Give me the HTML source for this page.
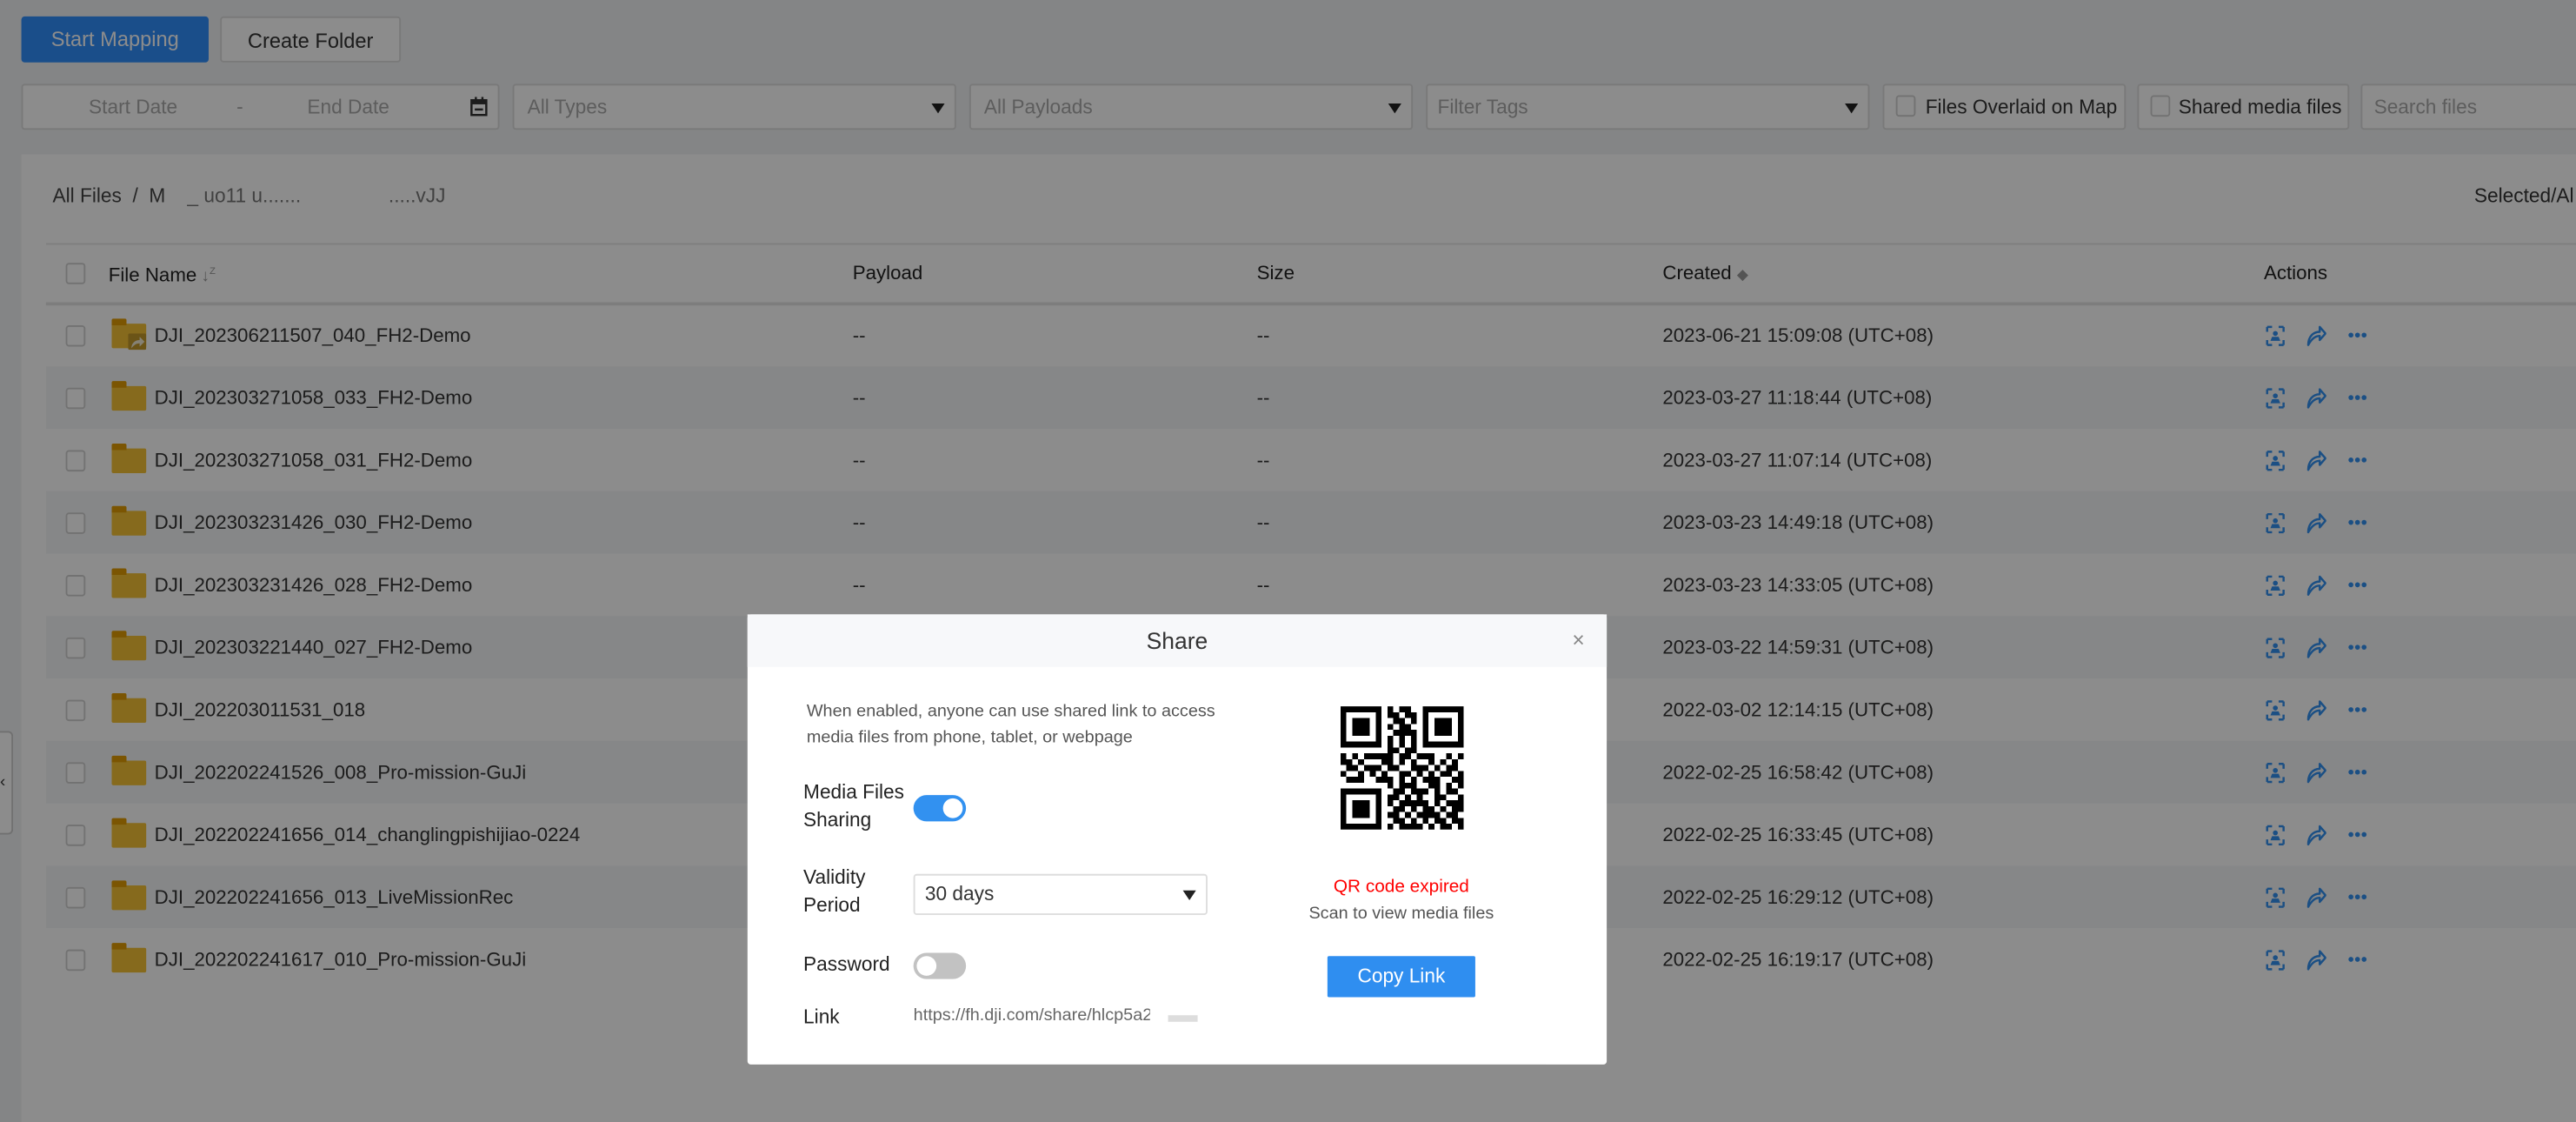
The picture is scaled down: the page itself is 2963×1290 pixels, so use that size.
<!DOCTYPE html>
<html><head><meta charset="utf-8">
<style>
*{box-sizing:border-box;margin:0;padding:0}
html,body{width:2963px;height:1290px;overflow:hidden;background:#f0f2f5}
body{font-family:"Liberation Sans",sans-serif;}
#w{position:absolute;left:0;top:0;width:1568px;height:683px;overflow:hidden;transform:scale(1.88967,1.88873);transform-origin:0 0;background:#f0f2f5;color:#333;font-size:12px}
.a{position:absolute}
.btn{position:absolute;height:28px;line-height:28px;text-align:center;font-size:12.5px;border-radius:2px}
.box{position:absolute;top:51px;height:28px;border:1px solid #dcdcdc;background:#fff;border-radius:2px;line-height:26px;font-size:12px}
.ph{color:#aaa}
.tri{position:absolute;width:0;height:0;border-left:4px solid transparent;border-right:4px solid transparent;border-top:6px solid #222}
.cb{position:absolute;width:12px;height:13px;border:1px solid #d0d0d0;border-radius:2px;background:#fff}
.row{position:absolute;left:28px;width:1540px;height:38px;line-height:38px;font-size:11.8px;color:#333}
.row.s{background:#f5f6f7}
.row span{position:absolute}
.fold{position:absolute;left:40px;top:12px;width:21px;height:15px;background:#f4c235;border-radius:1px}
.fold:before{content:"";position:absolute;left:0;top:-3px;width:9px;height:4px;background:#e09b05;border-radius:1px 1px 0 0}
.tog{position:absolute;width:32px;height:16px;border-radius:8px}
.tog i{position:absolute;top:2px;width:12px;height:12px;border-radius:6px;background:#fff}
#ov{position:absolute;left:0;top:0;width:1568px;height:683px;background:rgba(0,0,0,.45)}
</style></head><body>
<div id="w">
<div class="btn" style="left:13px;top:10px;width:114px;background:#318efb;color:#fff">Start Mapping</div>
<div class="btn" style="left:134px;top:10px;width:110px;background:#fff;border:1px solid #dcdcdc;color:#333">Create Folder</div>

<div class="box" style="left:13px;width:291px"><span class="a ph" style="left:40px">Start Date</span><span class="a ph" style="left:130px">-</span><span class="a ph" style="left:173px">End Date</span>
<svg class="a" style="left:272px;top:7px" width="11" height="12" viewBox="0 0 11 12"><rect x="1" y="2" width="9" height="9" fill="none" stroke="#333" stroke-width="1.3"/><rect x="1" y="2" width="9" height="2.5" fill="#333"/><rect x="3" y="0" width="1.3" height="3" fill="#333"/><rect x="7" y="0" width="1.3" height="3" fill="#333"/><rect x="3" y="7" width="5" height="1.3" fill="#333"/></svg></div>
<div class="box" style="left:312px;width:270px"><span class="a ph" style="left:8px">All Types</span><i class="tri" style="right:6px;top:11px"></i></div>
<div class="box" style="left:590px;width:270px"><span class="a ph" style="left:8px">All Payloads</span><i class="tri" style="right:6px;top:11px"></i></div>
<div class="box" style="left:868px;width:270px"><span class="a ph" style="left:6px">Filter Tags</span><i class="tri" style="right:6px;top:11px"></i></div>
<div class="box" style="left:1146px;width:148px"><i class="cb" style="left:7px;top:6px"></i><span class="a" style="left:25px">Files Overlaid on Map</span></div>
<div class="box" style="left:1301px;width:129px"><i class="cb" style="left:7px;top:6px"></i><span class="a" style="left:24px">Shared media files</span></div>
<div class="box" style="left:1437px;width:140px"><span class="a ph" style="left:7px">Search files</span></div>

<div class="a" style="left:13px;top:94px;width:1560px;height:600px;background:#fff"></div>
<div class="a" style="left:32px;top:112px;font-size:12px;color:#444">All Files&nbsp; /&nbsp; M<span style="color:#777">&nbsp;&nbsp;&nbsp; _ uo11 u.......&nbsp;&nbsp;&nbsp;&nbsp;&nbsp;&nbsp;&nbsp;&nbsp;&nbsp;&nbsp;&nbsp;&nbsp;&nbsp;&nbsp;&nbsp; .....vJJ</span></div>
<div class="a" style="left:1506px;top:112px;color:#333">Selected/Al</div>
<div class="a" style="left:28px;top:148px;width:1540px;height:1px;background:#e6e6e6"></div>
<div class="row" style="top:148px;height:36px;line-height:36px;color:#222">
<i class="cb" style="left:12px;top:12px"></i>
<span style="left:38px">File Name<span style="position:static;color:#999;font-size:10px"> ↓<sup style="font-size:6px">Z</sup></span></span>
<span style="left:491px">Payload</span><span style="left:737px">Size</span><span style="left:984px">Created <span style="position:static;color:#999;font-size:9px">◆</span></span><span style="left:1350px">Actions</span>
</div>
<div class="a" style="left:28px;top:184px;width:1540px;height:2px;background:#e3e3e3"></div>
<div id="rows"></div>

<div class="a" style="left:0;top:445px;width:8px;height:63px;background:#fff;border:1px solid #ccc;border-left:none;border-radius:0 3px 3px 0;font-size:10px;line-height:61px;color:#333">‹</div>

<div id="ov"></div>

<div class="a" style="left:455px;top:374px;width:523px;height:274px;background:#fff;border-radius:2px">
<div class="a" style="left:0;top:0;width:523px;height:32px;background:#f7f8fa;text-align:center;line-height:32px;font-size:14px;color:#333">Share</div>
<div class="a" style="left:502px;top:8px;font-size:13px;color:#888">×</div>
<div class="a" style="left:36px;top:51px;font-size:10.5px;line-height:16px;color:#555;width:260px">When enabled, anyone can use shared link to access media files from phone, tablet, or webpage</div>
<div class="a" style="left:34px;top:100px;font-size:12px;line-height:17px;color:#222">Media Files<br>Sharing</div>
<div class="tog" style="left:101px;top:110px;background:#3291f0"><i style="left:18px"></i></div>
<div class="a" style="left:34px;top:152px;font-size:12px;line-height:17px;color:#222">Validity<br>Period</div>
<div class="a" style="left:101px;top:158px;width:179px;height:25px;border:1px solid #ddd;border-radius:2px;line-height:23px;padding-left:6px;font-size:12px;color:#333">30 days<i class="tri" style="right:6px;top:9px"></i></div>
<div class="a" style="left:34px;top:206px;font-size:12px;color:#222">Password</div>
<div class="tog" style="left:101px;top:206px;background:#c2c2c2"><i style="left:2px"></i></div>
<div class="a" style="left:34px;top:238px;font-size:12px;color:#222">Link</div>
<div class="a" style="left:101px;top:238px;font-size:10.5px;color:#666;width:144px;overflow:hidden;white-space:nowrap">https://fh.dji.com/share/hlcp5a2</div>
<div class="a" style="left:256px;top:244px;width:18px;height:4px;background:#ddd"></div>
<svg id="qr" class="a" style="left:361px;top:56px" width="75" height="75" viewBox="0 0 21 21" shape-rendering="crispEdges"></svg>
<div class="a" style="left:298px;top:160px;width:200px;text-align:center;font-size:11px;color:#f00">QR code expired</div>
<div class="a" style="left:298px;top:176px;width:200px;text-align:center;font-size:10.5px;color:#555">Scan to view media files</div>
<div class="a" style="left:353px;top:208px;width:90px;height:25px;background:#2f8ef0;color:#fff;text-align:center;line-height:25px;font-size:12px;border-radius:1px">Copy Link</div>
</div>
</div>
<script>
var names=["DJI_202306211507_040_FH2-Demo","DJI_202303271058_033_FH2-Demo","DJI_202303271058_031_FH2-Demo","DJI_202303231426_030_FH2-Demo","DJI_202303231426_028_FH2-Demo","DJI_202303221440_027_FH2-Demo","DJI_202203011531_018","DJI_202202241526_008_Pro-mission-GuJi","DJI_202202241656_014_changlingpishijiao-0224","DJI_202202241656_013_LiveMissionRec","DJI_202202241617_010_Pro-mission-GuJi"];
var dates=["2023-06-21 15:09:08","2023-03-27 11:18:44","2023-03-27 11:07:14","2023-03-23 14:49:18","2023-03-23 14:33:05","2023-03-22 14:59:31","2022-03-02 12:14:15","2022-02-25 16:58:42","2022-02-25 16:33:45","2022-02-25 16:29:12","2022-02-25 16:19:17"];
var ic='<svg style="position:absolute;left:1351px;top:13px" width="12" height="13" viewBox="0 0 12 13"><g fill="none" stroke="#3291f0" stroke-width="1.3"><path d="M1 1h3M8 1h3M1 12h3M8 12h3M1 1v3M11 1v3M1 9v3M11 9v3"/></g><circle cx="6" cy="5" r="1.5" fill="#3291f0"/><path d="M3 9.5h6L8 7H4z" fill="#3291f0"/></svg>'+
'<svg style="position:absolute;left:1375px;top:12px" width="13" height="14" viewBox="0 0 13 14"><path d="M2 13C2 8 5 5 9 5V2l3.5 4L9 10V7.5C6 7.5 4 9.5 2 13z" fill="none" stroke="#3291f0" stroke-width="1.3" stroke-linejoin="round"/></svg>'+
'<svg style="position:absolute;left:1401px;top:17px" width="12" height="4"><circle cx="2" cy="2" r="1.5" fill="#3291f0"/><circle cx="6" cy="2" r="1.5" fill="#3291f0"/><circle cx="10" cy="2" r="1.5" fill="#3291f0"/></svg>';
var h="";
for(var i=0;i<11;i++){var t=185+i*38;var rec=i<6;
h+='<div class="row'+(i%2?' s':'')+'" style="top:'+t+'px"><i class="cb" style="left:12px;top:13px"></i><i class="fold"></i>'+(i==0?'<svg style="position:absolute;left:50px;top:18px" width="11" height="10"><rect width="11" height="10" rx="1" fill="#c49a2a"/><path d="M2 9C2 6 4 4 7 4V2l3 3-3 3V6C5 6 3.5 7 2 9z" fill="#fff" opacity=".8"/></svg>':'')+'<span style="left:66px">'+names[i]+'</span>'+(rec?'<span style="left:491px">--</span><span style="left:737px">--</span>':'')+'<span style="left:984px">'+dates[i]+' (UTC+08)</span>'+ic+'</div>';}
document.getElementById("rows").innerHTML=h;
var q=["111111101011001111111","100000101101101000001","101110100110101011101","101110101011001011101","101110100111101011101","100000101010101000001","111111101010101111111","000000001101100000000","101011111011011100101","110100011010100101010","011011101100111010110","100101010011010101101","011100111010101110011","000000001011100110101","111111100110111010110","100000101101010011001","101110101011111010111","101110100110101101011","101110101101011110110","100000100110101011011","111111101011110101101"];
var d="";for(var y=0;y<21;y++)for(var x=0;x<21;x++)if(q[y][x]=="1")d+="M"+x+" "+y+"h1v1h-1z";
document.getElementById("qr").innerHTML='<path d="'+d+'" fill="#000"/>';
</script>
</body></html>
